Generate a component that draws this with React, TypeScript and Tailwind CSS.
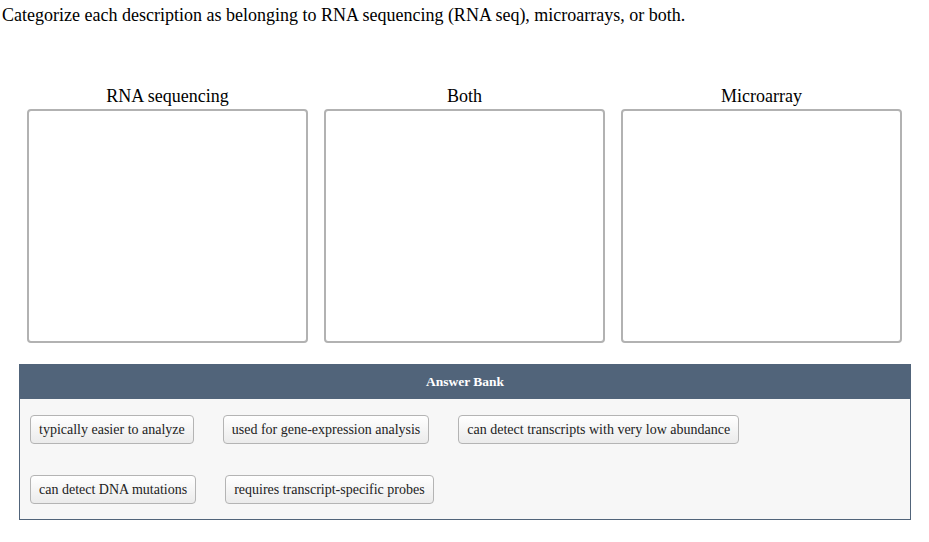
const columns = ["RNA sequencing", "Both", "Microarray"];

const rows = [
  ["typically easier to analyze", "used for gene-expression analysis", "can detect transcripts with very low abundance"],
  ["can detect DNA mutations", "requires transcript-specific probes"],
];

function Chip({ label }: { label: string }) {
  return (
    <div className="h-[29px] px-[8px] flex items-center rounded-[4px] border border-[#b4b4b4] bg-gradient-to-b from-white to-[#ebebeb] text-[14px] text-[#222] whitespace-nowrap">
      {label}
    </div>
  );
}

export default function App() {
  return (
    <div
      className="w-[929px] h-[542px] bg-white text-black overflow-hidden"
      style={{ fontFamily: "'Liberation Serif', 'Times New Roman', serif" }}
    >
      <p className="pl-[2px] pt-[4px] text-[18px] leading-[22px]">
        Categorize each description as belonging to RNA sequencing (RNA seq), microarrays, or both.
      </p>

      {/* drop zones */}
      <div className="mt-[59px] pl-[27px] flex gap-[16px]">
        {columns.map((c) => (
          <div key={c} className="w-[281px] flex flex-col">
            <div className="text-center text-[18px] leading-[22px] h-[24px]">{c}</div>
            <div className="h-[234px] border-2 border-[#b2b2b2] rounded-[4px]" />
          </div>
        ))}
      </div>

      {/* answer bank */}
      <div className="mt-[21px] ml-[19px] w-[892px] border border-[#51647a]">
        <div className="h-[34px] bg-[#51647a] flex items-center justify-center text-white text-[13.5px] font-bold">
          Answer Bank
        </div>
        <div className="bg-[#f7f7f7] pl-[10px] pt-[16px] pb-[15px] flex flex-col gap-[31px]">
          {rows.map((r, i) => (
            <div key={i} className="flex gap-[29px]">
              {r.map((t) => (
                <Chip key={t} label={t} />
              ))}
            </div>
          ))}
        </div>
      </div>
    </div>
  );
}
